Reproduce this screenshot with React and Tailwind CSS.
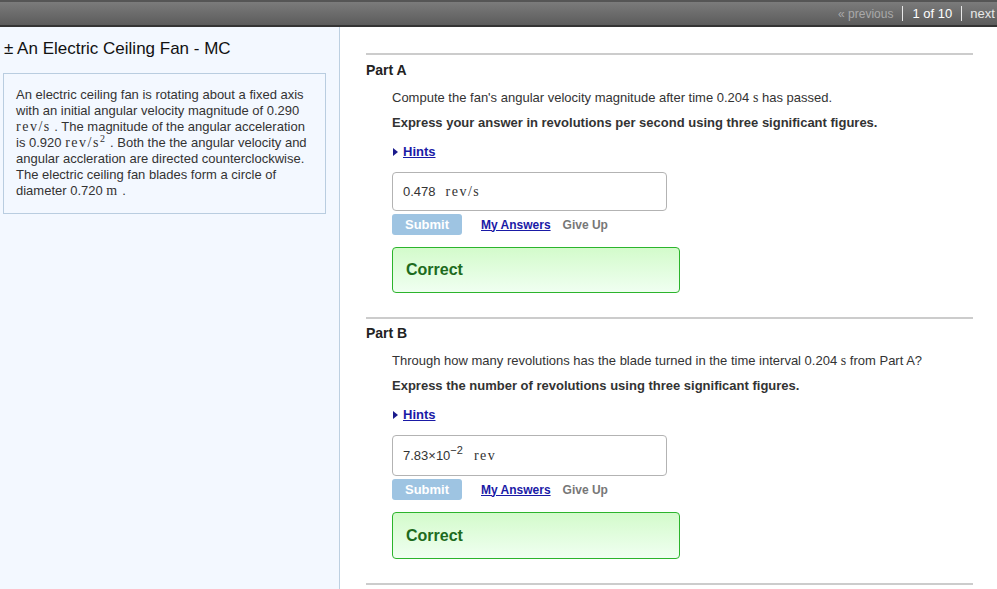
import React from "react";

function M({ children }) {
  return <span className="font-['Liberation_Serif','DejaVu_Serif',serif] text-[14px] tracking-[1.5px]">{children}</span>;
}

function Part({ label, question, instruction, answer, first }) {
  return (
    <div>
      <div className="h-[2px] bg-[#cccccc]" />
      <div className={`${first ? "mt-[7px]" : "mt-[6px]"} text-[14px] leading-[16px] font-bold text-[#222]`}>{label}</div>
      <div className="pl-[26px]">
        <div className="mt-[12px] text-[13px] leading-[16px] text-[#333]">{question}</div>
        <div className="mt-[9px] text-[13px] leading-[16px] font-bold text-[#333]">{instruction}</div>
        <div className="mt-[13px] flex items-center text-[13px] leading-[16px]">
          <svg width="5" height="8" viewBox="0 0 5 8" className="ml-[1px] mr-[5px]">
            <path d="M0 0 L5 4 L0 8 Z" fill="#1a1a8c" />
          </svg>
          <span className="font-bold text-[#1a1aa6] underline">Hints</span>
        </div>
        <div className={`mt-[12px] w-[275px] ${first ? "h-[39px]" : "h-[41px]"} rounded-[4px] border border-[#b3b3b3] bg-white flex items-center pl-[10px] text-[13px] text-[#333]`}>
          {answer}
        </div>
        <div className="mt-[3px] flex items-center">
          <div className="w-[70px] h-[21px] rounded-[3px] bg-[#9ec4e2] text-white font-bold text-[13px] flex items-center justify-center">Submit</div>
          <span className="ml-[19px] text-[12px] font-bold text-[#1a1aa6] underline">My Answers</span>
          <span className="ml-[12px] text-[12px] font-bold text-[#777]">Give Up</span>
        </div>
        <div className={`mt-[12px] w-[288px] ${first ? "h-[46px]" : "h-[47px]"} rounded-[4px] border border-[#2cb42c] bg-gradient-to-b from-[#d3fbcb] to-[#f0fff1] flex items-center pl-[13px]`}>
          <span className="text-[16px] font-bold text-[#1d6b1d]">Correct</span>
        </div>
      </div>
      <div className="h-[24px]" />
    </div>
  );
}

export default function App() {
  return (
    <div className="w-[997px] h-[589px] overflow-hidden bg-white font-['Liberation_Sans',Arial,sans-serif] flex flex-col">
      <div className="h-[27px] shrink-0 border-t-2 border-t-[#555] border-b-2 border-b-[#343434] bg-gradient-to-b from-[#7b7b7b] to-[#5c5c5c] flex items-center overflow-hidden">
        <div className="flex-1" />
        <div className="flex items-center -mr-[7px]">
          <span className="text-[12px] text-[#a9a9a9]">« previous</span>
          <span className="ml-[9px] w-px h-[15px] bg-[#e8e8e8]" />
          <span className="ml-[9px] text-[13px] text-white">1 of 10</span>
          <span className="ml-[9px] w-px h-[15px] bg-[#e8e8e8]" />
          <span className="ml-[8px] text-[13px] text-[#e8e8e8]">next<span className="ml-[2px]">»</span></span>
        </div>
      </div>
      <div className="flex flex-1 min-h-0">
        <aside className="w-[340px] shrink-0 bg-[#f3f8ff] border-r border-[#bdd0e1] pl-[3px] pr-[13px]">
          <h1 className="mt-[12px] pl-[1px] text-[17px] leading-[20px] text-[#111]">± An Electric Ceiling Fan - MC</h1>
          <div className="mt-[14px] border border-[#b9cde0] pl-[12px] pr-[8px] pt-[13px] pb-[14px] text-[13px] leading-[16px] text-[#333]">
            An electric ceiling fan is rotating about a fixed axis with an initial angular velocity magnitude of 0.290{" "}
            <M>rev/s</M> . The magnitude of the angular acceleration is 0.920{" "}
            <M>
              rev/s<sup className="text-[10px]">2</sup>
            </M>{" "}
            . Both the the angular velocity and angular accleration are directed counterclockwise. The electric ceiling fan blades form a circle of diameter 0.720 <M>m</M> .
          </div>
        </aside>
        <main className="flex-1 pl-[26px] pr-[24px] pt-[26px]">
          <Part
            first
            label="Part A"
            question={<>Compute the fan's angular velocity magnitude after time 0.204 <span className="font-['Liberation_Serif',serif] text-[14px]">s</span> has passed.</>}
            instruction="Express your answer in revolutions per second using three significant figures."
            answer={<><span>0.478</span><span className="ml-[10px]"><M>rev/s</M></span></>}
          />
          <Part
            label="Part B"
            question={<>Through how many revolutions has the blade turned in the time interval 0.204 <span className="font-['Liberation_Serif',serif] text-[14px]">s</span> from Part A?</>}
            instruction="Express the number of revolutions using three significant figures."
            answer={<><span>7.83×10<sup className="text-[11px]">−2</sup></span><span className="ml-[11px]"><M>rev</M></span></>}
          />
          <div className="h-[2px] bg-[#cccccc]" />
        </main>
      </div>
    </div>
  );
}
